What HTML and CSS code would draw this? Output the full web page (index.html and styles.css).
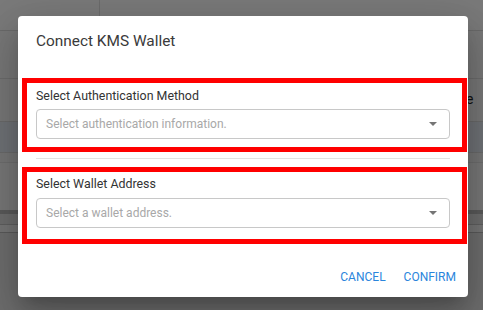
FILE: index.html
```html
<!DOCTYPE html>
<html>
<head>
<meta charset="utf-8">
<link rel="stylesheet" href="styles.css">
</head>
<body>
<div class="page">
  <div class="topbar"><div class="topcell"></div></div>
  <div class="row r1"></div>
  <div class="row r2"><span class="edge-text">e</span></div>
  <div class="row band"></div>
  <div class="row r3"></div>
  <div class="row r4"></div>
  <div class="row r5"></div>
  <div class="row r6"></div>
  <div class="row r7"></div>
</div>

<div class="dialog">
  <h2 class="title">Connect KMS Wallet</h2>
  <div class="mark mark-1">
    <div class="label">Select Authentication Method</div>
    <div class="select">
      <span class="placeholder">Select authentication information.</span>
      <span class="arrow"></span>
    </div>
  </div>
  <div class="divider"></div>
  <div class="mark mark-2">
    <div class="label">Select Wallet Address</div>
    <div class="select">
      <span class="placeholder">Select a wallet address.</span>
      <span class="arrow"></span>
    </div>
  </div>
  <div class="actions">
    <button class="btn">CANCEL</button>
    <button class="btn">CONFIRM</button>
  </div>
</div>
</body>
</html>
```

FILE: styles.css
```css
* { box-sizing: border-box; }
html, body { margin: 0; padding: 0; }
body {
  width: 483px;
  height: 310px;
  overflow: hidden;
  background: #767676;
  font-family: Roboto, "Liberation Sans", Arial, sans-serif;
  position: relative;
}
.page { display: flex; flex-direction: column; }
.topbar {
  height: 31px;
  border-bottom: 1px solid #6a6a6a;
  background: #7a7a7a;
}
.topcell { width: 100px; height: 30px; border-right: 1px solid #6c6c6c; }
.row { position: relative; }
.r1 { height: 48px; border-bottom: 1px solid #6c6c6c; background: #787878; }
.r2 { height: 42px; background: #787878; }
.edge-text {
  position: absolute;
  left: 466px;
  top: 12px;
  font-size: 14px;
  color: #111;
}
.band { height: 32px; background: #6f7276; border-top: 1px solid #6a6a6a; border-bottom: 1px solid #6a6a6a; }
.r3 { height: 10px; background: #767676; border-bottom: 1px solid #6e6e6e; }
.r4 { height: 47px; background: #787878; }
.r5 { height: 4px; background: #5a5a5a; }
.r6 { height: 11px; background: #6e6e6e; border-bottom: 1px solid #5f5f5f; }
.r7 { height: 80px; background: #6e6e6e; border-top: 1px solid #5a5a5a; margin-top: 7px; }

.dialog {
  position: absolute;
  left: 18px;
  top: 16px;
  width: 450px;
  height: 281px;
  background: #fff;
  border-radius: 4px;
  box-shadow: 0 11px 15px -7px rgba(0,0,0,.2), 0 24px 38px 3px rgba(0,0,0,.14), 0 9px 46px 8px rgba(0,0,0,.12);
  display: flex;
  flex-direction: column;
}
.title {
  margin: 0;
  padding: 14px 18px 0;
  height: 62px;
  font-size: 15.4px;
  font-weight: 400;
  color: #3a3a3a;
  line-height: 22px;
}
.mark {
  margin: 0 1px 0 4px;
  border: 5px solid #ff0000;
  padding: 4px 12px 0 9px;
}
.mark-1 { height: 74px; }
.mark-2 { height: 77px; padding-top: 3px; }
.label {
  font-size: 12.4px;
  color: #333;
  line-height: 18px;
  height: 22px;
}
.mark-2 .label { height: 23px; }
.select {
  height: 30px;
  border: 1px solid #c8c8c8;
  border-radius: 4px;
  display: flex;
  align-items: center;
  justify-content: space-between;
  padding: 0 12px 0 9px;
}
.placeholder { font-size: 12px; color: #a8a8a8; }
.arrow {
  width: 0; height: 0;
  border-left: 4px solid transparent;
  border-right: 4px solid transparent;
  border-top: 4px solid #757575;
}
.divider {
  height: 1px;
  background: #e3e3e3;
  margin: 6px 18px 8px;
}
.actions {
  display: flex;
  justify-content: flex-end;
  gap: 18px;
  padding: 26px 12px 0 0;
}
.btn {
  border: 0;
  background: none;
  padding: 0;
  font-family: Roboto, "Liberation Sans", Arial, sans-serif;
  font-size: 12px;
  color: #2a85dc;
  line-height: 14px;
}
```
